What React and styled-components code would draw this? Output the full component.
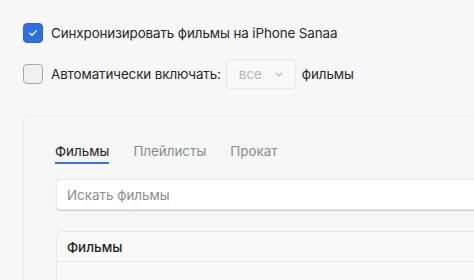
import React from "react";
import styled, { createGlobalStyle } from "styled-components";

const GlobalStyle = createGlobalStyle`
  html, body {
    margin: 0;
    padding: 0;
    background: #f7f7f7;
    overflow: hidden;
  }
  body {
    font-family: Inter, "Liberation Sans", Arial, sans-serif;
    color: #2a2a2a;
    -webkit-font-smoothing: antialiased;
  }
`;

const Page = styled.div`
  width: 474px;
  height: 280px;
  padding: 22px 0 0 23px;
  box-sizing: border-box;
  overflow: hidden;
`;

const Row = styled.div`
  display: flex;
  align-items: center;
  height: ${(p) => p.h || 22}px;
  margin-bottom: ${(p) => p.mb || 0}px;
`;

const Box = styled.div`
  width: 20px;
  height: 20px;
  box-sizing: border-box;
  border-radius: 4px;
  flex-shrink: 0;
  display: flex;
  align-items: center;
  justify-content: center;
  background: ${(p) => (p.checked ? "#2f6fe0" : "#f0f0f0")};
  border: 1px solid ${(p) => (p.checked ? "#2a66d4" : "#a9a9a9")};
  margin-right: 8px;
`;

const Label = styled.span`
  font-size: 13.4px;
  letter-spacing: -0.1px;
  color: #262626;
`;

const Select = styled.div`
  width: 70px;
  height: 30px;
  box-sizing: border-box;
  margin: 0 6px 0 5px;
  border: 1px solid #e6e6e6;
  border-radius: 4px;
  background: #f8f8f8;
  display: flex;
  align-items: center;
  padding: 0 0 0 12px;
  gap: 13px;
  font-size: 13.4px;
  color: #b5b5b5;
`;

const Panel = styled.div`
  margin-top: 26px;
  width: 470px;
  height: 200px;
  box-sizing: border-box;
  border: 1px solid #ebebeb;
  border-radius: 6px;
  background: #f6f6f6;
  padding: 26px 0 0 31px;
`;

const Tabs = styled.div`
  display: flex;
  gap: 24px;
  margin-bottom: 15px;
`;

const Tab = styled.div`
  font-size: 13.4px;
  padding-bottom: 2px;
  color: ${(p) => (p.active ? "#222" : "#8a8a8a")};
  border-bottom: 2px solid ${(p) => (p.active ? "#3b73d8" : "transparent")};
  line-height: 18px;
`;

const Search = styled.div`
  height: 31px;
  box-sizing: border-box;
  margin-left: 1px;
  background: #fff;
  border: 1px solid #e8e8e8;
  border-right: none;
  border-radius: 4px 0 0 4px;
  box-shadow: 0 1px 1px rgba(0, 0, 0, 0.18);
  display: flex;
  align-items: center;
  padding-left: 10px;
  font-size: 13.4px;
  color: #8c8c8c;
  margin-bottom: 21px;
`;

const List = styled.div`
  margin-left: 1px;
  border: 1px solid #e9e9e9;
  border-right: none;
  border-bottom: none;
  border-radius: 6px 0 0 0;
  background: #f8f8f8;
  height: 60px;
`;

const ListHead = styled.div`
  height: 29px;
  display: flex;
  align-items: center;
  padding-left: 10px;
  font-size: 13.4px;
  font-weight: 500;
  color: #1e1e1e;
  border-bottom: 1px solid #e8e8e8;
`;

const Check = () => (
  <svg width="12" height="12" viewBox="0 0 12 12">
    <path d="M2.8 6.2 L5 8.3 L9.3 3.6" fill="none" stroke="#fff" strokeWidth="1.3" strokeLinecap="round" strokeLinejoin="round" />
  </svg>
);

const Chevron = () => (
  <svg width="8" height="5" viewBox="0 0 8 5">
    <path d="M1 1 L4 4 L7 1" fill="none" stroke="#bdbdbd" strokeWidth="1.1" strokeLinecap="round" strokeLinejoin="round" />
  </svg>
);

export default function App() {
  return (
    <>
      <GlobalStyle />
      <Page>
        <Row h={22} mb={15}>
          <Box checked>
            <Check />
          </Box>
          <Label>Синхронизировать фильмы на iPhone Sanaa</Label>
        </Row>
        <Row h={30}>
          <Box />
          <Label>Автоматически включать:</Label>
          <Select>
            все
            <Chevron />
          </Select>
          <Label>фильмы</Label>
        </Row>
        <Panel>
          <Tabs>
            <Tab active>Фильмы</Tab>
            <Tab>Плейлисты</Tab>
            <Tab>Прокат</Tab>
          </Tabs>
          <Search>Искать фильмы</Search>
          <List>
            <ListHead>Фильмы</ListHead>
          </List>
        </Panel>
      </Page>
    </>
  );
}
